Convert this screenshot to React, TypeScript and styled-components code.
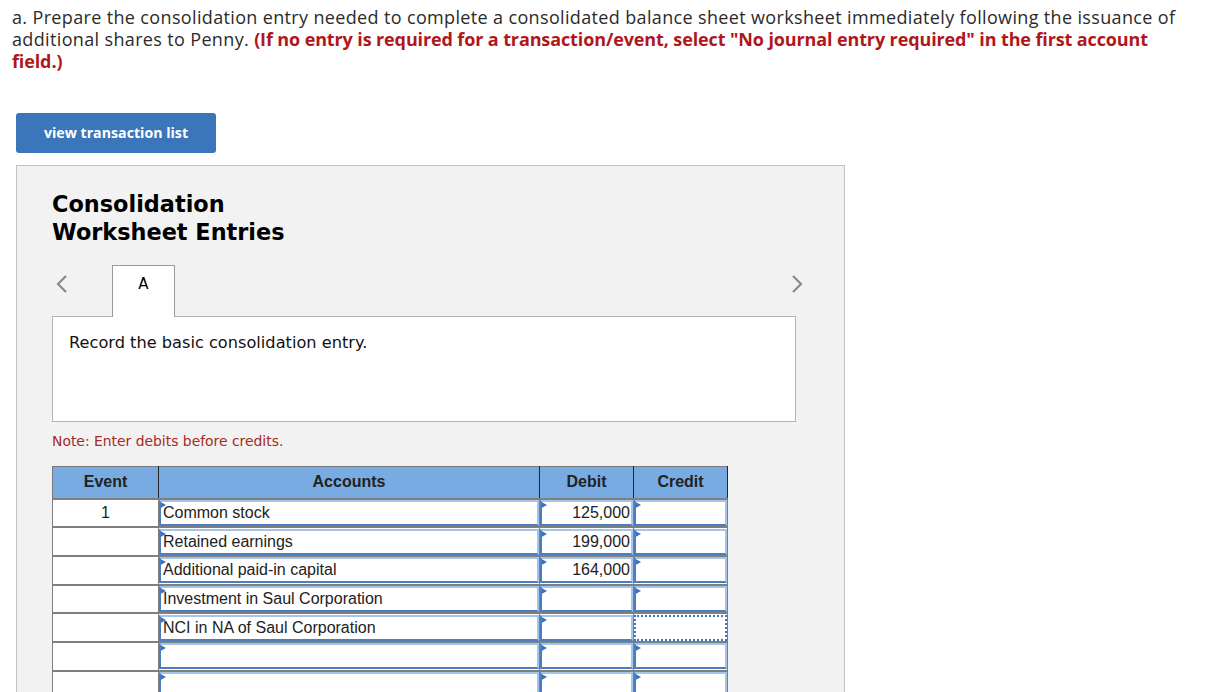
import React from "react";
import styled, { createGlobalStyle } from "styled-components";

const GlobalStyle = createGlobalStyle`
  html, body { margin: 0; padding: 0; background: #ffffff; overflow: hidden; }
  * { box-sizing: border-box; }
`;

const Page = styled.div`
  padding: 6px 12px 0 12px;
  font-family: "Open Sans", Lato, sans-serif;
`;

const Prompt = styled.p`
  margin: 0;
  font-size: 18px;
  line-height: 22px;
  letter-spacing: 0.35px;
  color: #2b2b2b;
  white-space: nowrap;
  font-variant-ligatures: none;
`;

const Warn = styled.strong`
  color: #b0171b;
  font-weight: 700;
  letter-spacing: -0.12px;
`;

const Section = styled.div`
  margin: 41px 0 0 4px;
  display: flex;
  flex-direction: column;
  align-items: flex-start;
`;

const ListButton = styled.button`
  width: 200px;
  height: 40px;
  border: none;
  border-radius: 3px;
  background: #3b76ba;
  color: #ffffff;
  font-family: "Open Sans", Lato, sans-serif;
  font-weight: 700;
  font-size: 14.2px;
  padding: 0 0 2px;
  cursor: pointer;
  font-variant-ligatures: none;
`;

const Panel = styled.div`
  margin-top: 12px;
  width: 829px;
  height: 560px;
  background: #f2f2f2;
  border: 1px solid #c2c2c2;
  padding: 24px 0 0 35px;
`;

const Title = styled.h2`
  margin: 0;
  font-family: "DejaVu Sans", Verdana, sans-serif;
  font-weight: 700;
  font-size: 22.4px;
  line-height: 28px;
  color: #000000;
`;

const Tabs = styled.div`
  width: 744px;
  margin-top: 19px;
  display: flex;
  align-items: flex-start;
`;

const Chevron = styled.button<{ $right?: boolean }>`
  width: 20px;
  height: 38px;
  border: none;
  background: transparent;
  padding: 0;
  display: flex;
  align-items: center;
  justify-content: center;
  margin-left: ${(p) => (p.$right ? "auto" : "0")};
  margin-right: ${(p) => (p.$right ? "-11px" : "0")};
`;

const Tab = styled.div`
  position: relative;
  z-index: 1;
  margin-left: 40px;
  width: 63px;
  height: 52px;
  margin-bottom: -1px;
  background: #ffffff;
  border: 1px solid #9a9a9a;
  border-bottom: none;
  text-align: center;
  padding-top: 9px;
  font-family: "DejaVu Sans", Verdana, sans-serif;
  font-size: 15px;
  color: #000;
`;

const EntryBox = styled.div`
  width: 744px;
  height: 106px;
  background: #ffffff;
  border: 1px solid #b3b3b3;
  padding: 16px 16px;
  font-family: "DejaVu Sans", Verdana, sans-serif;
  font-size: 16.2px;
  line-height: 20px;
  color: #111;
`;

const Note = styled.div`
  margin-top: 10px;
  font-family: "DejaVu Sans", Verdana, sans-serif;
  font-size: 13.9px;
  line-height: 18px;
  color: #a62a22;
`;

const Table = styled.table`
  margin-top: 16px;
  border-collapse: collapse;
  table-layout: fixed;
  width: 676px;
  font-family: "Liberation Sans", Arial, sans-serif;
`;

const Th = styled.th<{ $w: number }>`
  width: ${(p) => p.$w}px;
  height: 32px;
  background: #78abe2;
  border: 1px solid #262626;
  border-top-color: #7a7a7a;
  border-left-color: #7a7a7a;
  font-size: 16px;
  font-weight: 700;
  color: #222;
  padding: 0;
`;

const EventCell = styled.td`
  height: 28.7px;
  background: #ffffff;
  border: 1px solid #7f7f7f;
  border-top-width: 2px;
  text-align: center;
  font-size: 16px;
  color: #222;
  padding: 0;
`;

const InputCell = styled.td`
  height: 28.7px;
  border: 1px solid #7f7f7f;
  border-top-width: 2px;
  padding: 0;
  background: #ffffff;
`;

const Field = styled.div<{ $align?: string; $focus?: boolean }>`
  position: relative;
  height: 26px;
  background: #ffffff;
  border: 2px solid #4b7ec1;
  border-top-color: #a6c3e8;
  border-right-color: #a6c3e8;
  ${(p) => (p.$focus ? "border: 2px dotted #3a76c4;" : "")}
  text-align: ${(p) => p.$align || "left"};
  font-size: 16px;
  line-height: 22px;
  padding: 0 1px 0 2px;
  color: #222;
  white-space: nowrap;
  overflow: hidden;
`;

const Marker = styled.span`
  position: absolute;
  top: -1px;
  left: -2px;
  width: 0;
  height: 0;
  border-top: 4px solid transparent;
  border-bottom: 4px solid transparent;
  border-left: 7px solid #3b72bd;
`;

const ChevronIcon = ({ right }: { right?: boolean }) => (
  <svg width="12" height="20" viewBox="0 0 12 20">
    <polyline
      points={right ? "2,2 10,10 2,18" : "10,2 2,10 10,18"}
      fill="none"
      stroke="#8a8a8a"
      strokeWidth="2.2"
    />
  </svg>
);

const rows = [
  { event: "1", account: "Common stock", debit: "125,000", credit: "" },
  { event: "", account: "Retained earnings", debit: "199,000", credit: "" },
  { event: "", account: "Additional paid-in capital", debit: "164,000", credit: "" },
  { event: "", account: "Investment in Saul Corporation", debit: "", credit: "" },
  { event: "", account: "NCI in NA of Saul Corporation", debit: "", credit: "", focus: true },
  { event: "", account: "", debit: "", credit: "" },
  { event: "", account: "", debit: "", credit: "" },
  { event: "", account: "", debit: "", credit: "" },
];

export default function App() {
  return (
    <>
      <GlobalStyle />
      <Page>
        <Prompt>
          a. Prepare the consolidation entry needed to complete a consolidated balance sheet worksheet immediately following the issuance of
          <br />
          additional shares to Penny.{" "}
          <Warn>
            (If no entry is required for a transaction/event, select "No journal entry required" in the first account
            <br />
            field.)
          </Warn>
        </Prompt>
        <Section>
          <ListButton>view transaction list</ListButton>
          <Panel>
            <Title>
              Consolidation
              <br />
              Worksheet Entries
            </Title>
            <Tabs>
              <Chevron aria-label="previous">
                <ChevronIcon />
              </Chevron>
              <Tab>A</Tab>
              <Chevron $right aria-label="next">
                <ChevronIcon right />
              </Chevron>
            </Tabs>
            <EntryBox>Record the basic consolidation entry.</EntryBox>
            <Note>Note: Enter debits before credits.</Note>
            <Table>
              <thead>
                <tr>
                  <Th $w={106}>Event</Th>
                  <Th $w={381}>Accounts</Th>
                  <Th $w={94}>Debit</Th>
                  <Th $w={94}>Credit</Th>
                </tr>
              </thead>
              <tbody>
                {rows.map((r, i) => (
                  <tr key={i}>
                    <EventCell>{r.event}</EventCell>
                    <InputCell>
                      <Field>
                        <Marker />
                        {r.account}
                      </Field>
                    </InputCell>
                    <InputCell>
                      <Field $align="right">
                        <Marker />
                        {r.debit}
                      </Field>
                    </InputCell>
                    <InputCell>
                      {r.focus ? (
                        <Field $focus>{r.credit}</Field>
                      ) : (
                        <Field>
                          <Marker />
                          {r.credit}
                        </Field>
                      )}
                    </InputCell>
                  </tr>
                ))}
              </tbody>
            </Table>
          </Panel>
        </Section>
      </Page>
    </>
  );
}
